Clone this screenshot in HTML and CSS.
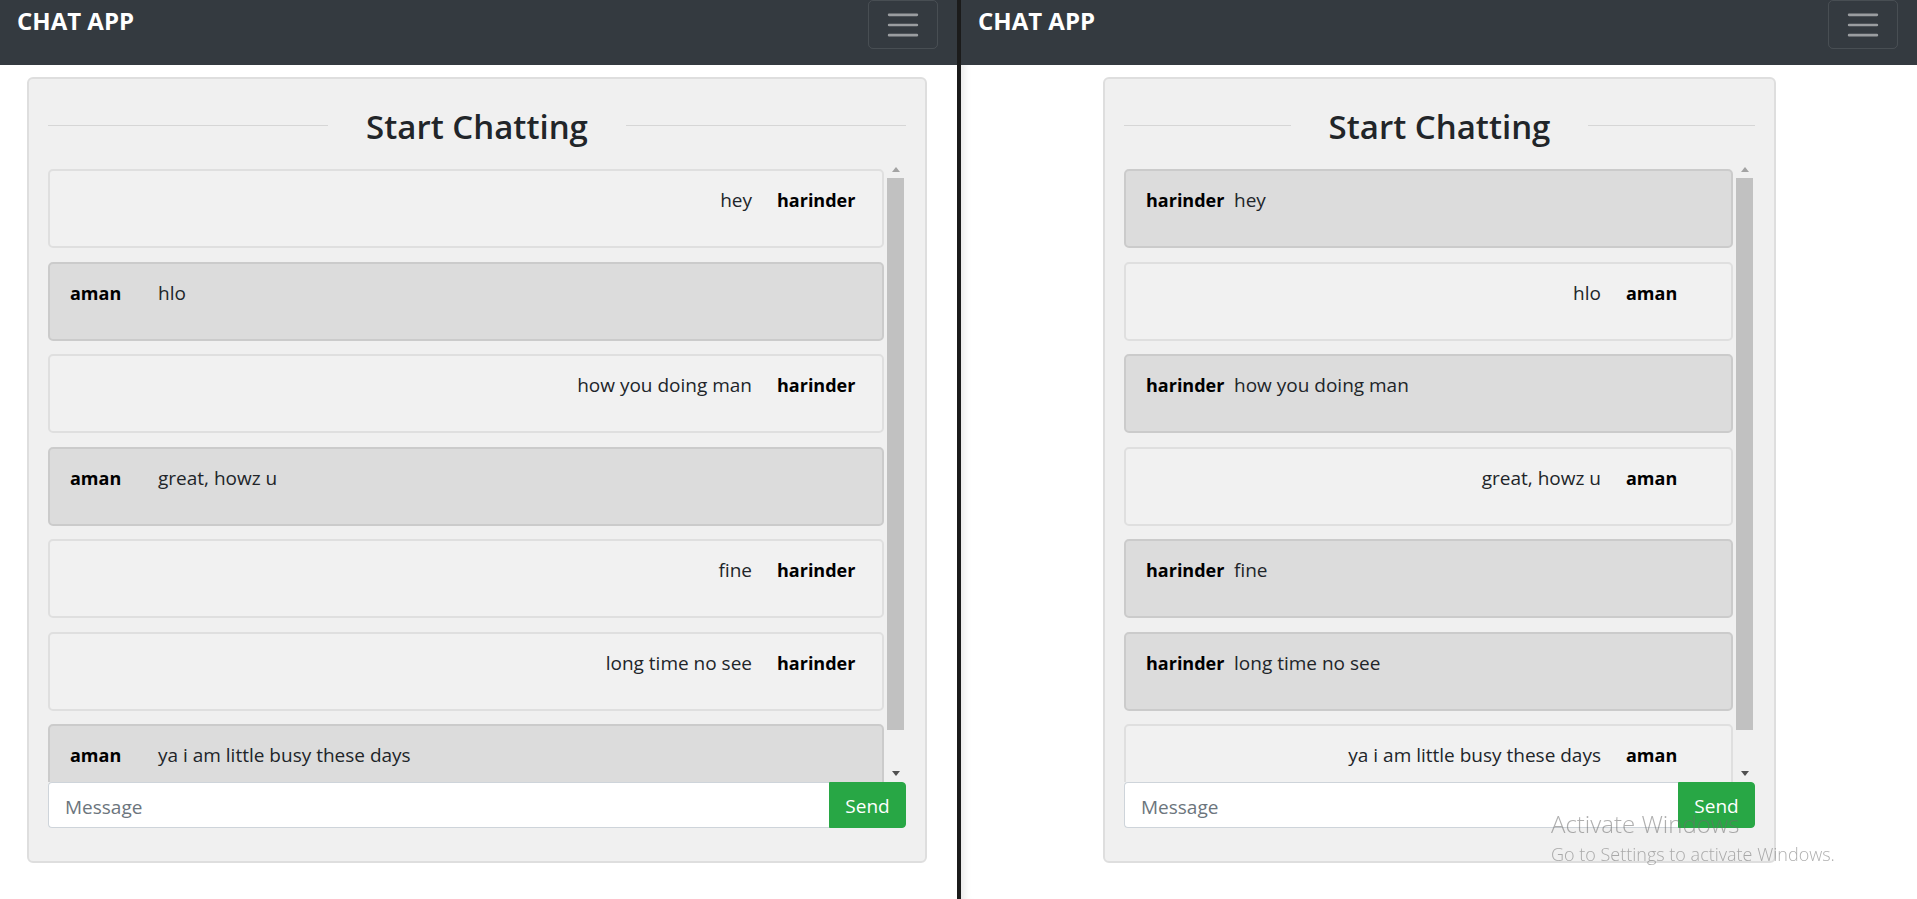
FILE: index.html
```html
<!DOCTYPE html>
<html lang="en">
<head>
  <meta charset="UTF-8" />
  <title>Chat App</title>
  <link rel="stylesheet" href="styles.css">
</head>
<body>
  <div class="screen">

    <!-- ventana de harinder -->
    <section class="window">
      <nav class="navbar">
        <span class="brand">CHAT APP</span>
        <button class="toggler" aria-label="Menu">
          <svg width="38" height="38" viewBox="0 0 30 30"><path d="M4 7h22M4 15h22M4 23h22" stroke="rgba(255,255,255,.5)" stroke-width="2" stroke-linecap="round"/></svg>
        </button>
      </nav>
      <div class="card card-wide">
        <div class="title-row">
          <span class="rule"></span>
          <h2>Start Chatting</h2>
          <span class="rule"></span>
        </div>
        <div class="chat-area">
          <div class="msg-list">
            <div class="msg msg-out"><span class="text">hey</span><span class="name">harinder</span></div>
            <div class="msg msg-in"><span class="name">aman</span><span class="text">hlo</span></div>
            <div class="msg msg-out"><span class="text">how you doing man</span><span class="name">harinder</span></div>
            <div class="msg msg-in"><span class="name">aman</span><span class="text">great, howz u</span></div>
            <div class="msg msg-out"><span class="text">fine</span><span class="name">harinder</span></div>
            <div class="msg msg-out"><span class="text">long time no see</span><span class="name">harinder</span></div>
            <div class="msg msg-in"><span class="name">aman</span><span class="text">ya i am little busy these days</span></div>
          </div>
          <div class="scrollbar">
            <div class="sb-btn"><span class="tri-up"></span></div>
            <div class="sb-thumb"></div>
            <div class="sb-track"></div>
            <div class="sb-btn"><span class="tri-down"></span></div>
          </div>
        </div>
        <form class="send-row">
          <input type="text" placeholder="Message" />
          <button type="button">Send</button>
        </form>
      </div>
    </section>

    <div class="divider"></div>

    <!-- ventana de aman -->
    <section class="window window-right">
      <nav class="navbar">
        <span class="brand">CHAT APP</span>
        <button class="toggler" aria-label="Menu">
          <svg width="38" height="38" viewBox="0 0 30 30"><path d="M4 7h22M4 15h22M4 23h22" stroke="rgba(255,255,255,.5)" stroke-width="2" stroke-linecap="round"/></svg>
        </button>
      </nav>
      <div class="card card-narrow">
        <div class="title-row">
          <span class="rule"></span>
          <h2>Start Chatting</h2>
          <span class="rule"></span>
        </div>
        <div class="chat-area">
          <div class="msg-list">
            <div class="msg msg-in"><span class="name">harinder</span><span class="text">hey</span></div>
            <div class="msg msg-out"><span class="text">hlo</span><span class="name">aman</span></div>
            <div class="msg msg-in"><span class="name">harinder</span><span class="text">how you doing man</span></div>
            <div class="msg msg-out"><span class="text">great, howz u</span><span class="name">aman</span></div>
            <div class="msg msg-in"><span class="name">harinder</span><span class="text">fine</span></div>
            <div class="msg msg-in"><span class="name">harinder</span><span class="text">long time no see</span></div>
            <div class="msg msg-out"><span class="text">ya i am little busy these days</span><span class="name">aman</span></div>
          </div>
          <div class="scrollbar">
            <div class="sb-btn"><span class="tri-up"></span></div>
            <div class="sb-thumb"></div>
            <div class="sb-track"></div>
            <div class="sb-btn"><span class="tri-down"></span></div>
          </div>
        </div>
        <form class="send-row">
          <input type="text" placeholder="Message" />
          <button type="button">Send</button>
        </form>
      </div>
    </section>
  </div>

  <div class="watermark">
    <div class="wm-title">Activate Windows</div>
    <div class="wm-sub">Go to Settings to activate Windows.</div>
  </div>
</body>
</html>
```

FILE: styles.css
```css
body {
  margin: 0;
  font-family: 'Open Sans', sans-serif;
  background: #ffffff;
  color: #212529;
  overflow: hidden;
}
.screen {
  display: flex;
  height: 899px;
}
.window {
  width: 957px;
  flex-shrink: 0;
}
.window-right {
  width: auto;
  flex: 1;
  box-shadow: inset 10px 0 10px -8px rgba(0, 0, 0, 0.12);
}
.divider {
  width: 4px;
  background: #1b1b1b;
}

/* barra superior */
.navbar {
  height: 65px;
  background: #343a40;
  display: flex;
  justify-content: space-between;
  align-items: flex-start;
  padding: 0 19px 0 17px;
}
.brand {
  color: #ffffff;
  font-weight: 700;
  font-size: 24px;
  line-height: 36px;
  margin-top: 3px;
}
.toggler {
  width: 70px;
  height: 49px;
  padding: 0;
  background: transparent;
  border: 1px solid rgba(255, 255, 255, 0.1);
  border-radius: 5px;
  display: flex;
  align-items: center;
  justify-content: center;
}

/* tarjeta del chat */
.card {
  box-sizing: border-box;
  margin-top: 12px;
  height: 786px;
  background: #f0f0f0;
  border: 2px solid #dedede;
  border-radius: 6px;
  padding: 26px 19px 33px;
  display: flex;
  flex-direction: column;
}
.card-wide {
  width: 900px;
  margin-left: 27px;
}
.card-narrow {
  width: 673px;
  margin-left: 142px;
}
.title-row {
  display: flex;
  align-items: center;
  margin-bottom: 13px;
}
.title-row h2 {
  margin: 0 38px;
  font-size: 33px;
  line-height: 43px;
  font-weight: 600;
  color: #212529;
}
.rule {
  flex: 1;
  height: 1px;
  background: #d6d6d6;
  margin-bottom: 3px;
}

.chat-area {
  height: 621px;
  display: flex;
  gap: 3px;
  padding-right: 2px;
}
.msg-list {
  flex: 1;
  overflow: hidden;
  padding-top: 8px;
}
.msg {
  box-sizing: border-box;
  height: 79px;
  padding: 15px 17px 0 20px;
  border: 2px solid;
  border-radius: 5px;
  margin-bottom: 13.5px;
  display: flex;
  align-items: baseline;
  font-size: 19px;
  line-height: 28px;
  color: #212529;
}
.msg-in {
  background: #dcdcdc;
  border-color: #cbcbcb;
}
.msg-out {
  background: #f1f1f1;
  border-color: #dfdfdf;
  justify-content: flex-end;
}
.msg .name {
  width: 88px;
  flex-shrink: 0;
  font-weight: 700;
  font-size: 18px;
  color: #000000;
}
.msg-out .text {
  margin-right: 25px;
}

/* barra de desplazamiento */
.scrollbar {
  width: 17px;
  display: flex;
  flex-direction: column;
}
.sb-btn {
  height: 17px;
  display: flex;
  align-items: center;
  justify-content: center;
}
.tri-up {
  border-left: 4.5px solid transparent;
  border-right: 4.5px solid transparent;
  border-bottom: 5px solid #a3a3a3;
}
.tri-down {
  border-left: 4.5px solid transparent;
  border-right: 4.5px solid transparent;
  border-top: 5px solid #505050;
}
.sb-thumb {
  height: 552px;
  background: #c1c1c1;
}
.sb-track {
  flex: 1;
}

/* campo de mensaje */
.send-row {
  display: flex;
  height: 46px;
  margin: 0;
}
.send-row input {
  flex: 1;
  min-width: 0;
  box-sizing: border-box;
  height: 46px;
  padding: 3px 16px 0;
  font-family: 'Open Sans', sans-serif;
  font-size: 19px;
  color: #495057;
  background: #ffffff;
  border: 1px solid #ced4da;
  border-right: none;
  border-radius: 4px 0 0 4px;
  outline: none;
}
.send-row input::placeholder {
  color: #6c757d;
}
.send-row button {
  width: 77px;
  height: 46px;
  font-family: 'Open Sans', sans-serif;
  font-size: 19px;
  color: #ffffff;
  background: #28a745;
  border: 1px solid #28a745;
  border-radius: 0 4px 4px 0;
  padding: 2px 0 0;
}

.watermark {
  position: fixed;
  left: 1551px;
  top: 808px;
  color: rgba(110, 110, 110, 0.55);
  font-weight: 300;
  pointer-events: none;
}
.wm-title {
  font-size: 24px;
  line-height: 32px;
}
.wm-sub {
  font-size: 18px;
  line-height: 24px;
  margin-top: 2px;
}
```
